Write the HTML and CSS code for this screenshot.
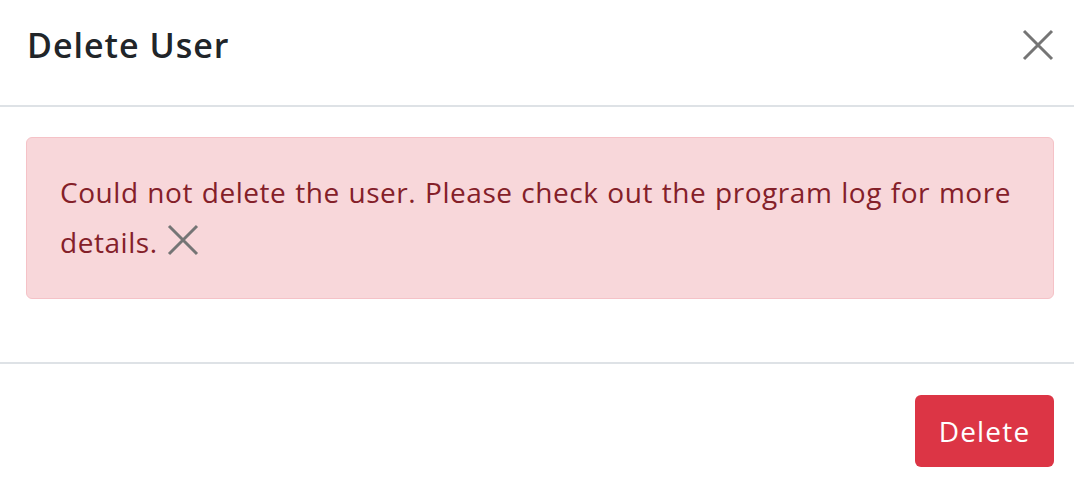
FILE: index.html
```html
<!DOCTYPE html>
<html lang="en">
<head>
<meta charset="utf-8">
<title>Delete User</title>
<link rel="stylesheet" href="styles.css">
</head>
<body>
<div class="modal">
  <header class="modal-header">
    <h5 class="modal-title">Delete User</h5>
    <button class="icon-close" type="button" aria-label="Close">
      <svg viewBox="0 0 32 32" width="32" height="32"><path d="M2 2 L30 30 M30 2 L2 30"/></svg>
    </button>
  </header>
  <div class="modal-body">
    <div class="alert">Could not delete the user. Please check out the program log for more details.<button class="icon-close alert-close" type="button" aria-label="Dismiss"><svg viewBox="0 0 32 32" width="32" height="32"><path d="M2 2 L30 30 M30 2 L2 30"/></svg></button></div>
  </div>
  <footer class="modal-footer">
    <button class="btn-danger" type="button">Delete</button>
  </footer>
</div>
</body>
</html>
```
FILE: styles.css
```css
html, body {
  margin: 0;
  padding: 0;
  background: #fff;
}

body {
  font-family: "Open Sans", "Noto Sans", sans-serif;
  color: #212529;
}

.modal {
  width: 1074px;
  height: 484px;
  display: flex;
  flex-direction: column;
}

.modal-header {
  box-sizing: border-box;
  border-bottom: 2px solid #dee2e6;
  height: 107px;
  padding: 0 20px 0 27px;
  display: flex;
  align-items: center;
  justify-content: space-between;
}

.modal-title {
  margin: 0;
  font-size: 34px;
  font-weight: 600;
  letter-spacing: 1px;
  line-height: 1;
  padding-bottom: 16px;
  color: #212529;
}

.icon-close {
  background: none;
  border: 0;
  padding: 0;
  cursor: pointer;
  display: inline-flex;
}

.icon-close svg {
  stroke: #757575;
  stroke-width: 3;
  fill: none;
}

.modal-header .icon-close {
  margin-bottom: 16px;
}

.modal-body {
  padding: 30px 20px 63px 26px;
}

.alert {
  background: #f8d7da;
  border: 1px solid #f5c2c7;
  border-radius: 6px;
  color: #842029;
  font-size: 28px;
  letter-spacing: 0.54px;
  word-spacing: 1px;
  line-height: 50px;
  padding: 29px 20px 31px 33px;
  height: 100px;
}

.alert-close {
  vertical-align: -3px;
  margin-left: 9px;
}

.modal-footer {
  border-top: 2px solid #dee2e6;
  padding: 31px 20px 0 0;
  display: flex;
  justify-content: flex-end;
}

.btn-danger {
  width: 139px;
  height: 72px;
  border: 0;
  border-radius: 6px;
  background: #dc3545;
  color: #fff;
  font-family: inherit;
  font-size: 28px;
  letter-spacing: 1.2px;
  padding: 0;
}
```
